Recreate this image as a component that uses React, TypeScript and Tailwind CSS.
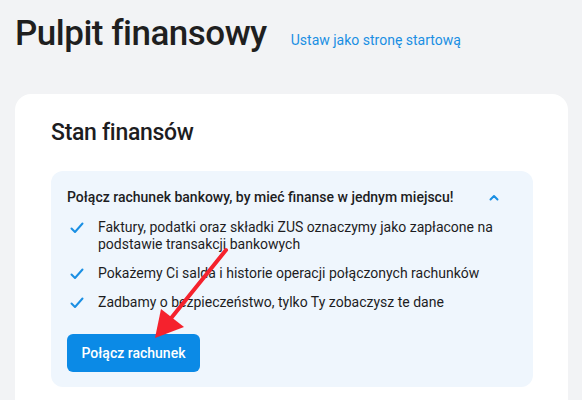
import React from 'react';

const items = [
  'Faktury, podatki oraz składki ZUS oznaczymy jako zapłacone na podstawie transakcji bankowych',
  'Pokażemy Ci salda i historie operacji połączonych rachunków',
  'Zadbamy o bezpieczeństwo, tylko Ty zobaczysz te dane',
];

const Check: React.FC = () => (
  <svg width="14" height="12" viewBox="0 0 14 12" fill="none" className="shrink-0 mt-[3px]">
    <path d="M1.5 6.5 L5 10 L12.5 1.5" stroke="#1a8fe3" strokeWidth="2" strokeLinecap="round" strokeLinejoin="round" />
  </svg>
);

const App: React.FC = () => {
  return (
    <div className="relative h-[400px] bg-[#f2f3f5] pl-[15px] pr-[14px] pt-[12px] text-[#1d1d1f] overflow-hidden" style={{ fontFamily: 'Roboto, "Noto Sans", sans-serif' }}>
      <div className="flex items-baseline gap-6">
        <h1 className="text-[35px] font-medium tracking-[-0.5px] leading-[44px] text-[#1f1f1f]">Pulpit finansowy</h1>
        <a href="#" className="text-[14px] text-[#1a8fe3]">Ustaw jako stronę startową</a>
      </div>

      <div className="mt-[38px] bg-white rounded-2xl pl-9 pr-[35px] pt-[24px] pb-10">
        <h2 className="text-[23px] font-medium tracking-[-0.3px] leading-[30px]">Stan finansów</h2>

        <div className="mt-[23px] bg-[#eff6fd] rounded-xl px-4 pt-4 pb-[15px]">
          <div className="flex items-center justify-between">
            <p className="text-[14px] font-medium leading-5">Połącz rachunek bankowy, by mieć finanse w jednym miejscu!</p>
            <svg width="10" height="7" viewBox="0 0 10 7" fill="none" className="mr-[18px]">
              <path d="M1.5 5.5 L5 2 L8.5 5.5" stroke="#1a8fe3" strokeWidth="2" strokeLinecap="round" strokeLinejoin="round" />
            </svg>
          </div>

          <ul className="mt-[12px] flex flex-col gap-[12px]">
            {items.map((t) => (
              <li key={t} className="flex gap-[14px] pl-[3px]">
                <Check />
                <span className="text-[14px] leading-[17px]">{t}</span>
              </li>
            ))}
          </ul>

          <button className="mt-[23px] h-[38px] w-[133px] rounded-md bg-[#0b8ae6] text-white text-[14px] font-medium">
            Połącz rachunek
          </button>
        </div>
      </div>

      <svg className="absolute left-0 top-0 pointer-events-none" width="582" height="400" viewBox="0 0 582 400">
        <line x1="226" y1="250" x2="168" y2="322" stroke="#f5222d" strokeWidth="4" strokeLinecap="round" />
        <polygon points="155,338 161,309 184,327" fill="#f5222d" />
      </svg>
    </div>
  );
};

export default App;
